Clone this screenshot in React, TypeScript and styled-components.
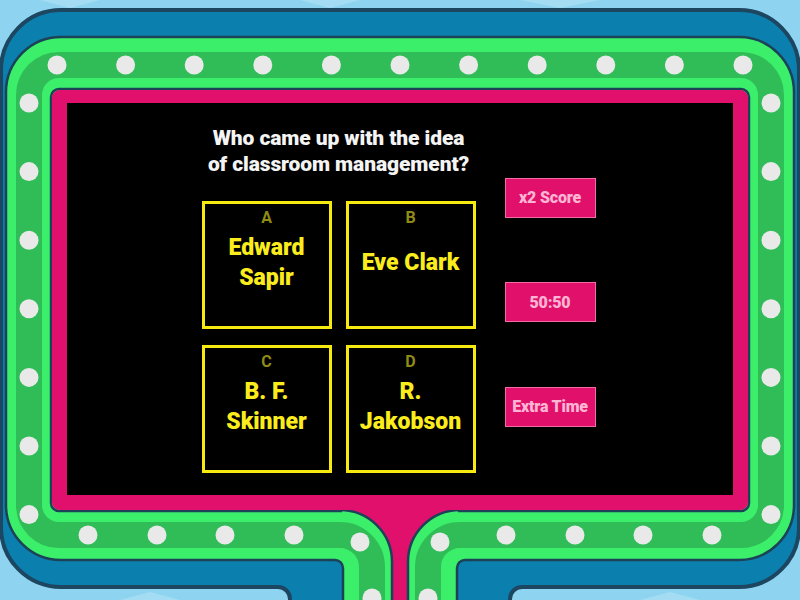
import React from "react";
import styled, { createGlobalStyle } from "styled-components";

const condensed = `"Roboto", "Liberation Sans", sans-serif`;

const GlobalStyle = createGlobalStyle`
  html, body {
    margin: 0;
    padding: 0;
    width: 800px;
    height: 600px;
    overflow: hidden;
    background: #8ed4f0;
  }
`;

const Stage = styled.main`
  background: #8ed4f0;
  box-sizing: border-box;
  height: 600px;
  overflow: hidden;
  padding: 90px 52px;
  position: relative;
  width: 800px;
`;

const FrameArt = styled.svg`
  height: 600px;
  left: 0;
  position: absolute;
  top: 0;
  width: 800px;
`;

const Screen = styled.section`
  background: #e1106c;
  border-radius: 8px;
  box-sizing: border-box;
  height: 420px;
  padding: 13px 15px 15px;
  position: relative;
`;

const Display = styled.div`
  align-items: center;
  background: #000;
  box-sizing: border-box;
  display: flex;
  gap: 29px;
  height: 100%;
  justify-content: center;
  padding-right: 3px;
`;

const QuestionColumn = styled.div`
  align-items: center;
  display: flex;
  flex-direction: column;
  width: 274px;
`;

const Question = styled.h1`
  color: #f4f4f4;
  font-family: ${condensed};
  font-size: 21px;
  font-weight: 900;
  letter-spacing: -0.1px;
  line-height: 26px;
  margin: 0 0 24px;
  text-align: center;
  white-space: nowrap;
`;

const AnswerGrid = styled.div`
  column-gap: 14px;
  display: grid;
  grid-auto-rows: 128px;
  grid-template-columns: repeat(2, 130px);
  row-gap: 16px;
`;

const AnswerCard = styled.button`
  background: transparent;
  border: 3px solid #f7ea10;
  box-sizing: border-box;
  display: grid;
  margin: 0;
  padding: 0;
  place-items: center;
`;

const Letter = styled.span`
  align-self: start;
  color: #8f8b14;
  font-family: ${condensed};
  font-size: 16px;
  font-weight: 700;
  grid-area: 1 / 1;
  line-height: 18px;
  margin-top: 5px;
`;

const AnswerText = styled.span`
  color: #fbed1d;
  font-family: ${condensed};
  font-size: 23px;
  font-weight: 900;
  grid-area: 1 / 1;
  letter-spacing: 0;
  line-height: 30px;
  margin-bottom: 4px;
  text-align: center;
`;

const PowerUps = styled.div`
  display: flex;
  flex-direction: column;
  gap: 64.5px;
  margin-top: 6px;
`;

const PowerUp = styled.button`
  background: #e0106b;
  border: 1.5px solid #f26aa6;
  box-sizing: border-box;
  color: #ffb4d4;
  font-family: ${condensed};
  font-size: 16px;
  font-weight: 900;
  height: 40px;
  letter-spacing: -0.2px;
  margin: 0;
  padding: 0;
  width: 91px;
`;

const answers = [
  { letter: "A", lines: ["Edward", "Sapir"] },
  { letter: "B", lines: ["Eve Clark"] },
  { letter: "C", lines: ["B. F.", "Skinner"] },
  { letter: "D", lines: ["R.", "Jakobson"] },
];

const powerUps = ["x2 Score", "50:50", "Extra Time"];

const dotStep = 68.6;
const topDots = Array.from({ length: 11 }, (_, i) => [57 + i * dotStep, 65]);
const sideY = Array.from({ length: 7 }, (_, i) => 103 + i * dotStep);
const sideDots = sideY.flatMap((y) => [
  [29, y],
  [771, y],
]);
const bottomDots = [
  [88, 535],
  [157, 535],
  [225, 535],
  [294, 535],
  [360, 542],
  [372, 598],
  [440, 542],
  [428, 598],
  [506, 535],
  [575, 535],
  [643, 535],
  [712, 535],
];

const outline = "#1c4257";

function StageFrame() {
  return (
    <FrameArt viewBox="0 0 800 600" aria-hidden="true">
      <polygon points="40,0 70,8 100,0" fill="#a4ddf3" />
      <polygon points="300,0 330,8 360,0" fill="#a4ddf3" />
      <polygon points="520,0 560,8 600,0" fill="#a4ddf3" />
      <polygon points="120,600 150,592 180,600" fill="#a4ddf3" />
      <polygon points="640,600 670,592 700,600" fill="#a4ddf3" />
      <path
        d="M 61 10 H 739 A 60 60 0 0 1 799 70 V 527 A 60 60 0 0 1 739 587 H 522 A 12 12 0 0 0 510 599 V 604 H 290 V 599 A 12 12 0 0 0 278 587 H 61 A 60 60 0 0 1 1 527 V 70 A 60 60 0 0 1 61 10 Z"
        fill="#0b7fae"
        stroke="#1d4660"
        strokeWidth="4"
      />
      <rect x="340" y="490" width="120" height="66" fill="#e1106c" />
      <rect x="392" y="550" width="16" height="52" fill="#e1106c" />
      <path
        d="M 61 37 H 739 A 55 55 0 0 1 794 92 V 505 A 55 55 0 0 1 739 560 H 465 A 8 8 0 0 0 457 568 V 604 H 408 V 562 A 52 52 0 0 1 460 510 V 470 H 340 V 510 A 52 52 0 0 1 392 562 V 604 H 343 V 568 A 8 8 0 0 0 335 560 H 61 A 55 55 0 0 1 6 505 V 92 A 55 55 0 0 1 61 37 Z"
        fill="#3cef6b"
        stroke={outline}
        strokeWidth="2.5"
      />
      <path
        d="M 372 604 V 567 A 32 32 0 0 0 340 535 H 59 A 30 30 0 0 1 29 505 V 95 A 30 30 0 0 1 59 65 H 741 A 30 30 0 0 1 771 95 V 505 A 30 30 0 0 1 741 535 H 460 A 32 32 0 0 0 428 567 V 604"
        fill="none"
        stroke="#30bd57"
        strokeWidth="26"
      />
      <path
        d="M 342 511 H 59 A 8 8 0 0 1 51 503 V 97 A 8 8 0 0 1 59 89 H 741 A 8 8 0 0 1 749 97 V 503 A 8 8 0 0 1 741 511 H 458"
        fill="none"
        stroke={outline}
        strokeWidth="2.5"
      />
      {[...topDots, ...sideDots, ...bottomDots].map(([cx, cy], i) => (
        <circle key={i} cx={cx} cy={cy} r="9.5" fill="#e9e9e9" />
      ))}
    </FrameArt>
  );
}

export default function App() {
  return (
    <>
      <GlobalStyle />
      <Stage>
        <StageFrame />
        <Screen>
          <Display>
            <QuestionColumn>
              <Question>
                Who came up with the idea
                <br />
                of classroom management?
              </Question>
              <AnswerGrid>
                {answers.map((a) => (
                  <AnswerCard key={a.letter}>
                    <Letter>{a.letter}</Letter>
                    <AnswerText>
                      {a.lines.map((line, i) => (
                        <React.Fragment key={line}>
                          {i > 0 && <br />}
                          {line}
                        </React.Fragment>
                      ))}
                    </AnswerText>
                  </AnswerCard>
                ))}
              </AnswerGrid>
            </QuestionColumn>
            <PowerUps>
              {powerUps.map((p) => (
                <PowerUp key={p}>{p}</PowerUp>
              ))}
            </PowerUps>
          </Display>
        </Screen>
      </Stage>
    </>
  );
}
